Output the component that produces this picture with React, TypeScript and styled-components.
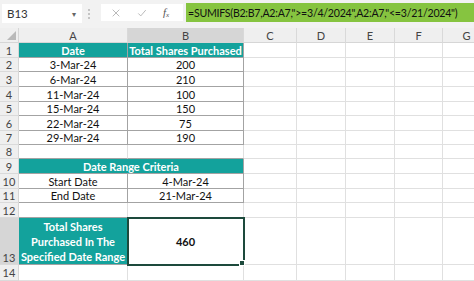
import React from "react";
import styled, { createGlobalStyle } from "styled-components";

const TEAL = "#13a29c";
const GRID = "#e0e0e0";
const EDGE = "#a3a3a3";

const GlobalStyle = createGlobalStyle`
  body {
    margin: 0;
    background: #ffffff;
    font-family: "Lato", "Noto Sans", sans-serif;
  }
`;

type Kind = "plain" | "teal" | "selected";

type CellDef = {
  text?: React.ReactNode;
  kind?: Kind;
  edge?: boolean;
  edgeBottom?: boolean;
  span?: number;
};

const columns = [
  { name: "A", width: 109 },
  { name: "B", width: 116 },
  { name: "C", width: 53 },
  { name: "D", width: 49 },
  { name: "E", width: 49 },
  { name: "F", width: 48 },
  { name: "G", width: 48 },
];

const rowHeights = [15, 14, 15, 15, 14, 15, 14, 14, 15, 15, 14, 15, 47, 16];

const data: { row: number; cells: CellDef[] }[] = [
  {
    row: 1,
    cells: [
      { text: "Date", kind: "teal", edge: true },
      { text: "Total Shares Purchased", kind: "teal", edge: true },
    ],
  },
  { row: 2, cells: [{ text: "3-Mar-24", edge: true }, { text: "200", edge: true }] },
  { row: 3, cells: [{ text: "6-Mar-24", edge: true }, { text: "210", edge: true }] },
  { row: 4, cells: [{ text: "11-Mar-24", edge: true }, { text: "100", edge: true }] },
  { row: 5, cells: [{ text: "15-Mar-24", edge: true }, { text: "150", edge: true }] },
  { row: 6, cells: [{ text: "22-Mar-24", edge: true }, { text: "75", edge: true }] },
  { row: 7, cells: [{ text: "29-Mar-24", edge: true }, { text: "190", edge: true }] },
  { row: 8, cells: [{ edgeBottom: true }, { edgeBottom: true }] },
  {
    row: 9,
    cells: [{ text: "Date Range Criteria", kind: "teal", edge: true, span: 2 }],
  },
  { row: 10, cells: [{ text: "Start Date", edge: true }, { text: "4-Mar-24", edge: true }] },
  { row: 11, cells: [{ text: "End Date", edge: true }, { text: "21-Mar-24", edge: true }] },
  { row: 12, cells: [{ edgeBottom: true }, { edgeBottom: true }] },
  {
    row: 13,
    cells: [
      {
        text: (
          <>
            Total Shares
            <br />
            Purchased In The
            <br />
            Specified Date Range
          </>
        ),
        kind: "teal",
        edge: true,
      },
      { text: "460", kind: "selected", edge: true },
    ],
  },
  { row: 14, cells: [{}, {}] },
];

export default function App() {
  return (
    <>
      <GlobalStyle />
      <Page>
        <Toolbar>
          <NameBox>
            <span>B13</span>
            <Caret>▾</Caret>
          </NameBox>
          <Grip>
            <i />
            <i />
            <i />
          </Grip>
          <FormulaButtons>
            <ToolIcon viewBox="0 0 12 12">
              <path d="M2 2 L10 10 M10 2 L2 10" stroke="#b4b4b4" strokeWidth="1.1" fill="none" />
            </ToolIcon>
            <ToolIcon viewBox="0 0 12 12">
              <path d="M1.5 6.5 L4.5 9.5 L10.5 2.5" stroke="#b4b4b4" strokeWidth="1.1" fill="none" />
            </ToolIcon>
            <Fx>
              f<sub>x</sub>
            </Fx>
          </FormulaButtons>
          <FormulaBar>
            =SUMIFS(B2:B7,A2:A7,"&gt;=3/4/2024",A2:A7,"&lt;=3/21/2024")
          </FormulaBar>
        </Toolbar>
        <Sheet>
          <Corner>
            <svg width="9" height="9" viewBox="0 0 9 9">
              <path d="M9 0 L9 9 L0 9 Z" fill="#b9b9b9" />
            </svg>
          </Corner>
          {columns.map((c) => (
            <ColHeader key={c.name} $active={c.name === "B"}>
              {c.name}
            </ColHeader>
          ))}
          {data.map(({ row, cells }) => {
            const used = cells.reduce((n, c) => n + (c.span ?? 1), 0);
            const rest = columns.slice(used);
            return (
              <React.Fragment key={row}>
                <RowHeader $active={row === 13}>{row}</RowHeader>
                {cells.map((c, i) => (
                  <Cell
                    key={i}
                    $kind={c.kind ?? "plain"}
                    $edge={!!c.edge}
                    $edgeBottom={!!c.edgeBottom}
                    $span={c.span ?? 1}
                  >
                    {c.text}
                  </Cell>
                ))}
                {rest.map((c) => (
                  <Cell key={c.name} $kind="plain" $edge={false} $edgeBottom={false} $span={1} />
                ))}
              </React.Fragment>
            );
          })}
        </Sheet>
      </Page>
    </>
  );
}

const Page = styled.div`
  width: 474px;
  height: 281px;
  overflow: hidden;
  background: #ffffff;
`;

const Toolbar = styled.div`
  display: flex;
  align-items: flex-start;
  height: 28px;
  box-sizing: border-box;
  padding: 3px 0 0 2px;
  background: #f2f2f2;
`;

const NameBox = styled.div`
  display: flex;
  align-items: center;
  justify-content: space-between;
  width: 80px;
  height: 19px;
  margin-top: 1px;
  box-sizing: border-box;
  padding: 0 6px 0 5px;
  background: #ffffff;
  font-size: 11.5px;
  color: #333333;
`;

const Caret = styled.span`
  font-size: 8px;
  color: #666666;
`;

const Grip = styled.div`
  display: flex;
  flex-direction: column;
  gap: 2px;
  margin: 6px 11px 0 6px;

  i {
    display: block;
    width: 2px;
    height: 2px;
    background: #c4c4c4;
  }
`;

const FormulaButtons = styled.div`
  display: flex;
  align-items: center;
  gap: 16px;
  width: 82px;
  height: 17px;
  margin-top: 1px;
  box-sizing: border-box;
  padding: 0 10px 0 10px;
  background: #ffffff;
`;

const ToolIcon = styled.svg`
  width: 10px;
  height: 10px;
`;

const Fx = styled.span`
  font-family: "Liberation Serif", serif;
  font-style: italic;
  font-size: 11px;
  color: #555555;

  sub {
    font-size: 7px;
    vertical-align: -1px;
  }
`;

const FormulaBar = styled.div`
  flex: 1;
  height: 19px;
  margin-left: 3px;
  padding-left: 2px;
  display: flex;
  align-items: center;
  background: #86c440;
  color: #111111;
  font-size: 10.6px;
  letter-spacing: -0.25px;
  white-space: nowrap;
  overflow: hidden;
`;

const Sheet = styled.div`
  display: grid;
  grid-template-columns: 19px ${columns.map((c) => `${c.width}px`).join(" ")};
  grid-template-rows: 15px ${rowHeights.map((h) => `${h}px`).join(" ")};
  font-size: 11px;
`;

const Corner = styled.div`
  display: flex;
  align-items: flex-end;
  justify-content: flex-end;
  padding: 0 2px 2px 0;
  background: #efefef;
  border-right: 1px solid #d6d6d6;
  border-bottom: 1px solid #d6d6d6;
`;

const ColHeader = styled.div<{ $active: boolean }>`
  display: flex;
  align-items: center;
  justify-content: center;
  background: ${({ $active }) => ($active ? "#d6d6d6" : "#efefef")};
  border-right: 1px solid #d9d9d9;
  border-bottom: 1px solid #d6d6d6;
  color: #444444;
`;

const RowHeader = styled.div<{ $active: boolean }>`
  display: flex;
  align-items: ${({ $active }) => ($active ? "flex-end" : "center")};
  justify-content: center;
  background: ${({ $active }) => ($active ? "#d6d6d6" : "#efefef")};
  border-right: 1px solid #d6d6d6;
  border-bottom: 1px solid #dadada;
  color: #444444;
  line-height: 13px;
`;

const Cell = styled.div<{
  $kind: Kind;
  $edge: boolean;
  $edgeBottom: boolean;
  $span: number;
}>`
  position: relative;
  grid-column: span ${({ $span }) => $span};
  display: flex;
  align-items: center;
  justify-content: center;
  text-align: center;
  line-height: 15px;
  white-space: nowrap;
  overflow: hidden;
  border-right: 1px solid ${({ $edge }) => ($edge ? EDGE : GRID)};
  border-bottom: 1px solid
    ${({ $edge, $edgeBottom }) => ($edge || $edgeBottom ? EDGE : GRID)};
  background: ${({ $kind }) => ($kind === "teal" ? TEAL : "#ffffff")};
  color: ${({ $kind }) => ($kind === "teal" ? "#ffffff" : "#111111")};
  font-weight: ${({ $kind }) => ($kind === "plain" ? 400 : 700)};

  ${({ $kind }) =>
    $kind === "selected" &&
    `
    overflow: visible;
    outline: 2px solid #1d4a3c;
    outline-offset: -1px;
    z-index: 1;

    &::after {
      content: "";
      position: absolute;
      right: -2px;
      bottom: -2px;
      width: 4px;
      height: 4px;
      background: #1d4a3c;
      border: 1px solid #ffffff;
    }
  `}
`;
